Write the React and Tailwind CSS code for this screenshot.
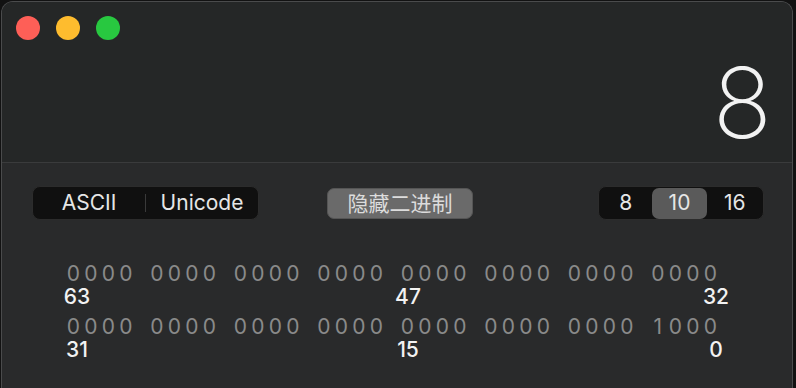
import React, { useState } from "react";

// bit rows: each row is 8 groups of 4 digits
const rows = [
  { bits: "00000000000000000000000000000000", labels: ["63", "47", "32"] },
  { bits: "00000000000000000000000000001000", labels: ["31", "15", "0"] },
];

const font = { fontFamily: 'Inter, "Noto Sans CJK SC", sans-serif' };

const BitRow = ({ bits, labels }) => {
  const groups = [];
  for (let i = 0; i < 8; i++) groups.push(bits.slice(i * 4, i * 4 + 4));
  return (
    <div className="flex flex-col">
      <div className="flex pl-[62.5px] gap-[13.5px] text-[21px] leading-none font-normal text-[#8a8a8a]">
        {groups.map((g, gi) => (
          <div key={gi} className="flex">
            {g.split("").map((d, di) => (
              <span key={di} className="w-[17.5px] text-center">{d}</span>
            ))}
          </div>
        ))}
      </div>
      <div className="flex pl-[55px] mt-[2px] text-[21px] leading-none font-medium text-[#f2f2f2]">
        <span className="w-[40px] text-center">{labels[0]}</span>
        <span className="w-[40px] text-center ml-[291px]">{labels[1]}</span>
        <span className="w-[40px] text-center ml-[268px]">{labels[2]}</span>
      </div>
    </div>
  );
};

export default function App() {
  const [base, setBase] = useState(10);
  const widths = { 8: "w-[52px]", 10: "w-[56px]", 16: "w-[55px]" };

  return (
    <div className="w-[796px] h-[388px] bg-[#121212] overflow-hidden" style={font}>
      <div className="ml-[1px] mt-[1px] w-[792px] h-[387px] border border-b-0 border-[#4a4b4c] rounded-t-[12px] bg-[#292a2b] overflow-hidden flex flex-col">
        {/* display */}
        <div className="h-[161px] bg-[#252727] border-b border-[#3a3b3c] flex flex-col">
          <div className="flex gap-4 pl-[14px] pt-[14px]">
            <div className="w-6 h-6 rounded-full bg-[#fe5f57]" />
            <div className="w-6 h-6 rounded-full bg-[#febc2e]" />
            <div className="w-6 h-6 rounded-full bg-[#28c840]" />
          </div>
          <div className="mt-[14px] pr-[20px] text-right text-[98px] leading-none font-extralight text-[#f2f2f2]">
            8
          </div>
        </div>

        {/* controls */}
        <div className="flex items-center pt-[23px] pl-[30px] pr-[28px]">
          <div className="w-[227px] h-[34px] rounded-[8px] bg-[#101010] border border-[#2c2c2c] flex items-center text-[21px] text-[#e6e6e6]">
            <span className="flex-1 text-center">ASCII</span>
            <span className="w-px h-[18px] bg-[#3a3a3a]" />
            <span className="flex-1 text-center">Unicode</span>
          </div>
          <button className="ml-[68px] w-[146px] h-[31px] rounded-[7px] bg-[#6a6a6a] border border-[#555] text-[21px] leading-none text-[#dcdcdc]">
            隐藏二进制
          </button>
          <div className="ml-auto w-[166px] h-[34px] rounded-[8px] bg-[#101010] border border-[#2c2c2c] flex items-center px-[1px] text-[21px] text-[#e6e6e6]">
            {[8, 10, 16].map((b) => (
              <span
                key={b}
                onClick={() => setBase(b)}
                className={`${widths[b]} h-[31px] flex items-center justify-center rounded-[7px] ${
                  base === b ? "bg-[#5a5a5a]" : ""
                }`}
              >
                {b}
              </span>
            ))}
          </div>
        </div>

        {/* bits */}
        <div className="flex flex-col gap-[9px] mt-[43px]">
          {rows.map((r, i) => (
            <BitRow key={i} bits={r.bits} labels={r.labels} />
          ))}
        </div>
      </div>
    </div>
  );
}
